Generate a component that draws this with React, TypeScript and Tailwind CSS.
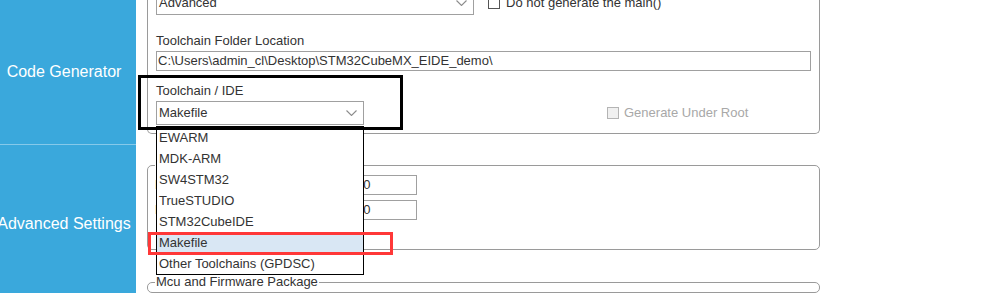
import { useState } from 'react';

const toolchains = ['EWARM', 'MDK-ARM', 'SW4STM32', 'TrueSTUDIO', 'STM32CubeIDE', 'Makefile', 'Other Toolchains (GPDSC)'];

function Chevron() {
    return (
        <svg width="11" height="6" viewBox="0 0 11 6" className="shrink-0">
            <polyline points="0.5,0.5 5.5,5.5 10.5,0.5" fill="none" stroke="#8c8c8c" strokeWidth="1.1" />
        </svg>
    );
}

function Select({ value, width }: { value: string; width: string }) {
    return (
        <div className={`flex h-[24px] items-center justify-between border border-[#a0a0a0] bg-white pr-[6px] pl-[2px] ${width}`}>
            <span>{value}</span>
            <Chevron />
        </div>
    );
}

export default function App() {
    const [selected] = useState('Makefile');

    return (
        <div className="relative flex h-[293px] w-[995px] overflow-hidden bg-white font-['Liberation_Sans',Arial,sans-serif] text-[13px] leading-[14px] text-[#333333]">
            {/* Sidebar */}
            <div className="flex w-[136px] shrink-0 flex-col bg-[#3aa8dc] text-[16px] leading-[18px] text-white">
                <div className="flex h-[144px] shrink-0 items-center justify-center pr-2 whitespace-nowrap">Code Generator</div>
                <div className="h-px shrink-0 bg-[#86c9ea]" />
                <div className="flex h-[158px] shrink-0 items-center justify-center pr-2 whitespace-nowrap">Advanced Settings</div>
            </div>

            {/* Main */}
            <div className="flex flex-col pl-[11px]">
                {/* Generated files panel */}
                <div className="w-[673px] rounded-b-[5px] border border-t-0 border-[#9a9a9a] px-2 pb-[8px]">
                    <div className="-mt-[9px] flex items-center">
                        <Select value="Advanced" width="w-[318px]" />
                        <div className="ml-[14px] flex items-center gap-[6px]">
                            <div className="h-[12px] w-[12px] border border-[#555] bg-white" />
                            <span>Do not generate the main()</span>
                        </div>
                    </div>

                    <div className="mt-[19px]">Toolchain Folder Location</div>
                    <div className="mt-[3px] flex h-[20px] w-[655px] items-center border border-[#a0a0a0] pl-[1px]">
                        C:\Users\admin_cl\Desktop\STM32CubeMX_EIDE_demo\
                    </div>

                    <div className="mt-[13px]">Toolchain / IDE</div>
                    <div className="mt-[3px] flex items-center">
                        <Select value={selected} width="w-[208px]" />
                        <div className="ml-[243px] flex items-center gap-[5px] text-[#a8a8a8]">
                            <div className="h-[12px] w-[12px] border border-[#b4b4b4] bg-[#f0f0f0]" />
                            <span>Generate Under Root</span>
                        </div>
                    </div>
                </div>

                {/* Linker settings */}
                <fieldset className="mt-[24px] w-[673px] rounded-[5px] border border-[#9a9a9a] pt-[3px] pr-2 pb-[29px] pl-[7px]">
                    <legend className="px-[1px]">Linker Settings</legend>
                    <div className="flex flex-col gap-[5px]">
                        <div className="flex items-center">
                            <span className="w-[177px]">Minimum Heap Size</span>
                            <div className="flex h-[20px] w-[85px] items-center border border-[#a0a0a0] pl-[2px]">0x200</div>
                        </div>
                        <div className="flex items-center">
                            <span className="w-[177px]">Minimum Stack Size</span>
                            <div className="flex h-[20px] w-[85px] items-center border border-[#a0a0a0] pl-[2px]">0x400</div>
                        </div>
                    </div>
                </fieldset>

                {/* Mcu and firmware package */}
                <fieldset className="mt-[25px] h-[60px] w-[673px] rounded-[5px] border border-[#9a9a9a] pr-2 pl-[7px]">
                    <legend className="px-[1px]">Mcu and Firmware Package</legend>
                </fieldset>
            </div>

            {/* Open toolchain list */}
            <div className="absolute top-[126px] left-[156px] w-[208px] border border-black bg-white">
                {toolchains.map((item) => (
                    <div key={item} className={`flex h-[21px] items-center pl-[2px] ${item === selected ? 'bg-[#d9e7f4]' : ''}`}>
                        {item}
                    </div>
                ))}
            </div>

            {/* Annotation boxes */}
            <div className="absolute top-[75px] left-[138px] h-[55px] w-[265px] border-[3px] border-black" />
            <div className="absolute top-[232px] left-[148px] h-[23px] w-[245px] border-[3px] border-[#ff3838]" />
        </div>
    );
}
